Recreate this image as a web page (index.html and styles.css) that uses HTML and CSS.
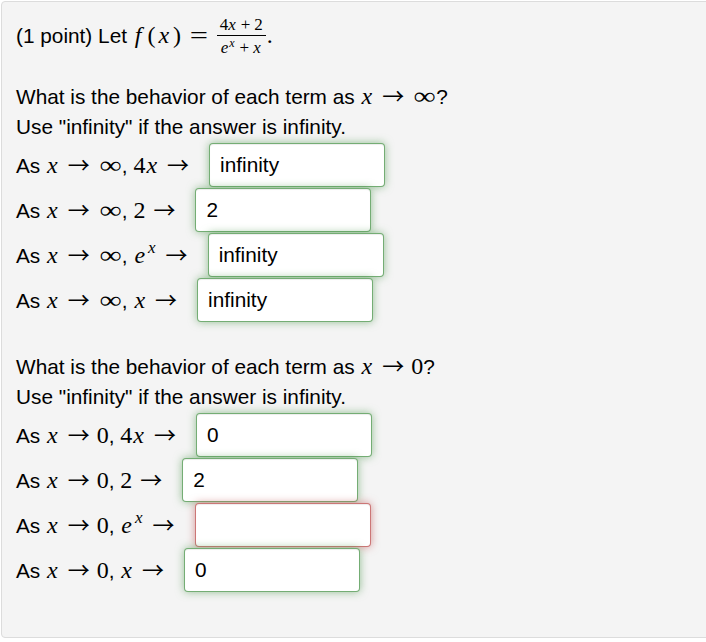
FILE: index.html
```html
<!DOCTYPE html>
<html>
<head>
<meta charset="utf-8">
<link rel="stylesheet" href="styles.css">
</head>
<body>
<div class="problem">
  <p class="intro">(1 point) Let <span class="m"><span class="mi fn">f</span><span class="pa">(</span><span class="mi">x</span><span class="pa">)</span><span class="eq">=</span><span class="frac"><span class="num">4<span class="mi">x</span><span class="bin">+</span>2</span><span class="den"><span class="mi">e</span><sup class="mi">x</sup><span class="bin">+</span><span class="mi">x</span></span></span>.</span></p>

  <p class="q">What is the behavior of each term as <span class="m"><span class="mi">x</span><span class="rel">→</span><span class="inf">∞</span></span>?<br>Use "infinity" if the answer is infinity.</p>
  <div class="rows">
    <div class="row"><span class="label">As <span class="m"><span class="mi">x</span><span class="rel">→</span><span class="inf">∞</span></span>, <span class="m">4<span class="mi">x</span><span class="rel">→</span></span></span><input class="ans ok" type="text" value="infinity"></div>
    <div class="row"><span class="label">As <span class="m"><span class="mi">x</span><span class="rel">→</span><span class="inf">∞</span></span>, <span class="m">2<span class="rel">→</span></span></span><input class="ans ok" type="text" value="2"></div>
    <div class="row"><span class="label">As <span class="m"><span class="mi">x</span><span class="rel">→</span><span class="inf">∞</span></span>, <span class="m"><span class="mi">e</span><sup class="mi">x</sup><span class="rel">→</span></span></span><input class="ans ok" type="text" value="infinity"></div>
    <div class="row"><span class="label">As <span class="m"><span class="mi">x</span><span class="rel">→</span><span class="inf">∞</span></span>, <span class="m"><span class="mi">x</span><span class="rel">→</span></span></span><input class="ans ok" type="text" value="infinity"></div>
  </div>

  <p class="q q2">What is the behavior of each term as <span class="m"><span class="mi">x</span><span class="rel">→</span>0</span>?<br>Use "infinity" if the answer is infinity.</p>
  <div class="rows">
    <div class="row"><span class="label">As <span class="m"><span class="mi">x</span><span class="rel">→</span>0</span>, <span class="m">4<span class="mi">x</span><span class="rel">→</span></span></span><input class="ans ok" type="text" value="0"></div>
    <div class="row"><span class="label">As <span class="m"><span class="mi">x</span><span class="rel">→</span>0</span>, <span class="m">2<span class="rel">→</span></span></span><input class="ans ok" type="text" value="2"></div>
    <div class="row"><span class="label">As <span class="m"><span class="mi">x</span><span class="rel">→</span>0</span>, <span class="m"><span class="mi">e</span><sup class="mi">x</sup><span class="rel">→</span></span></span><input class="ans bad" type="text" value=""></div>
    <div class="row"><span class="label">As <span class="m"><span class="mi">x</span><span class="rel">→</span>0</span>, <span class="m"><span class="mi">x</span><span class="rel">→</span></span></span><input class="ans ok" type="text" value="0"></div>
  </div>
</div>
</body>
</html>
```

FILE: styles.css
```css
html, body {
  margin: 0;
  padding: 0;
  background: #ffffff;
  overflow: hidden;
}

body {
  font-family: "Liberation Sans", Arial, sans-serif;
  font-size: 20.8px;
  color: #000;
}

.problem {
  margin: 1px 0 0 1px;
  width: 740px;
  height: 637px;
  box-sizing: border-box;
  border: 1px solid #dcdcdc;
  border-radius: 4px;
  background: #f4f4f4;
  padding: 16px 14px 0 14px;
}

p {
  margin: 0;
}

.intro {
  line-height: 30px;
}

.q {
  margin-top: 27px;
  line-height: 30px;
}

.q2 {
  margin-top: 29px;
}

.m {
  font-family: "Liberation Serif", "DejaVu Serif", serif;
  font-size: 24px;
  line-height: 1;
  white-space: nowrap;
}

.mi {
  font-style: italic;
  padding: 0 2px 0 1px;
}

.fn {
  padding: 0 4px 0 2px;
}

.pa {
  padding: 0 2px;
}

.rel {
  font-family: "Noto Sans CJK JP", "DejaVu Sans", sans-serif;
  font-size: 22px;
  margin: 0 7px 0 8px;
}

.eq {
  display: inline-block;
  transform: scaleX(1.35);
  margin: 0 10px 0 9px;
}

.bin {
  margin: 0 4px;
}

.inf {
  display: inline-block;
  transform: scaleX(1.3);
  margin: 0 3px 0 5px;
}

sup.mi {
  font-size: 17px;
  vertical-align: 10px;
  line-height: 0;
}

.frac {
  display: inline-block;
  vertical-align: -10px;
  text-align: center;
  font-size: 17px;
  margin: 0 1px 0 1px;
}

.frac .mi {
  padding: 0 1px 0 0;
}

.num {
  display: block;
  line-height: 14px;
  padding: 0 3px 3px;
  border-bottom: 1px solid #000;
}

.den {
  display: block;
  line-height: 14px;
  padding: 5px 3px 0;
}

.den sup.mi {
  font-size: 12px;
  vertical-align: 6px;
}

.rows {
  display: flex;
  flex-direction: column;
  margin-top: 1px;
}

.row {
  display: flex;
  align-items: center;
  height: 44px;
  margin-bottom: 1px;
}

.label {
  white-space: nowrap;
}

.ans {
  margin-left: 13px;
  width: 176px;
  height: 44px;
  box-sizing: border-box;
  padding: 0 10px;
  font-family: "Liberation Sans", Arial, sans-serif;
  font-size: 20.8px;
  color: #000;
  background: #fff;
  border: 1px solid;
  border-radius: 4px;
  outline: none;
}

.ok {
  border-color: rgba(81, 153, 81, 0.8);
  box-shadow: inset 0 1px 1px rgba(0, 0, 0, 0.075), 0 0 8px rgba(81, 153, 81, 0.6);
}

.bad {
  border-color: rgba(191, 84, 84, 0.8);
  box-shadow: inset 0 1px 1px rgba(0, 0, 0, 0.075), 0 0 8px rgba(191, 84, 84, 0.6);
}
```
